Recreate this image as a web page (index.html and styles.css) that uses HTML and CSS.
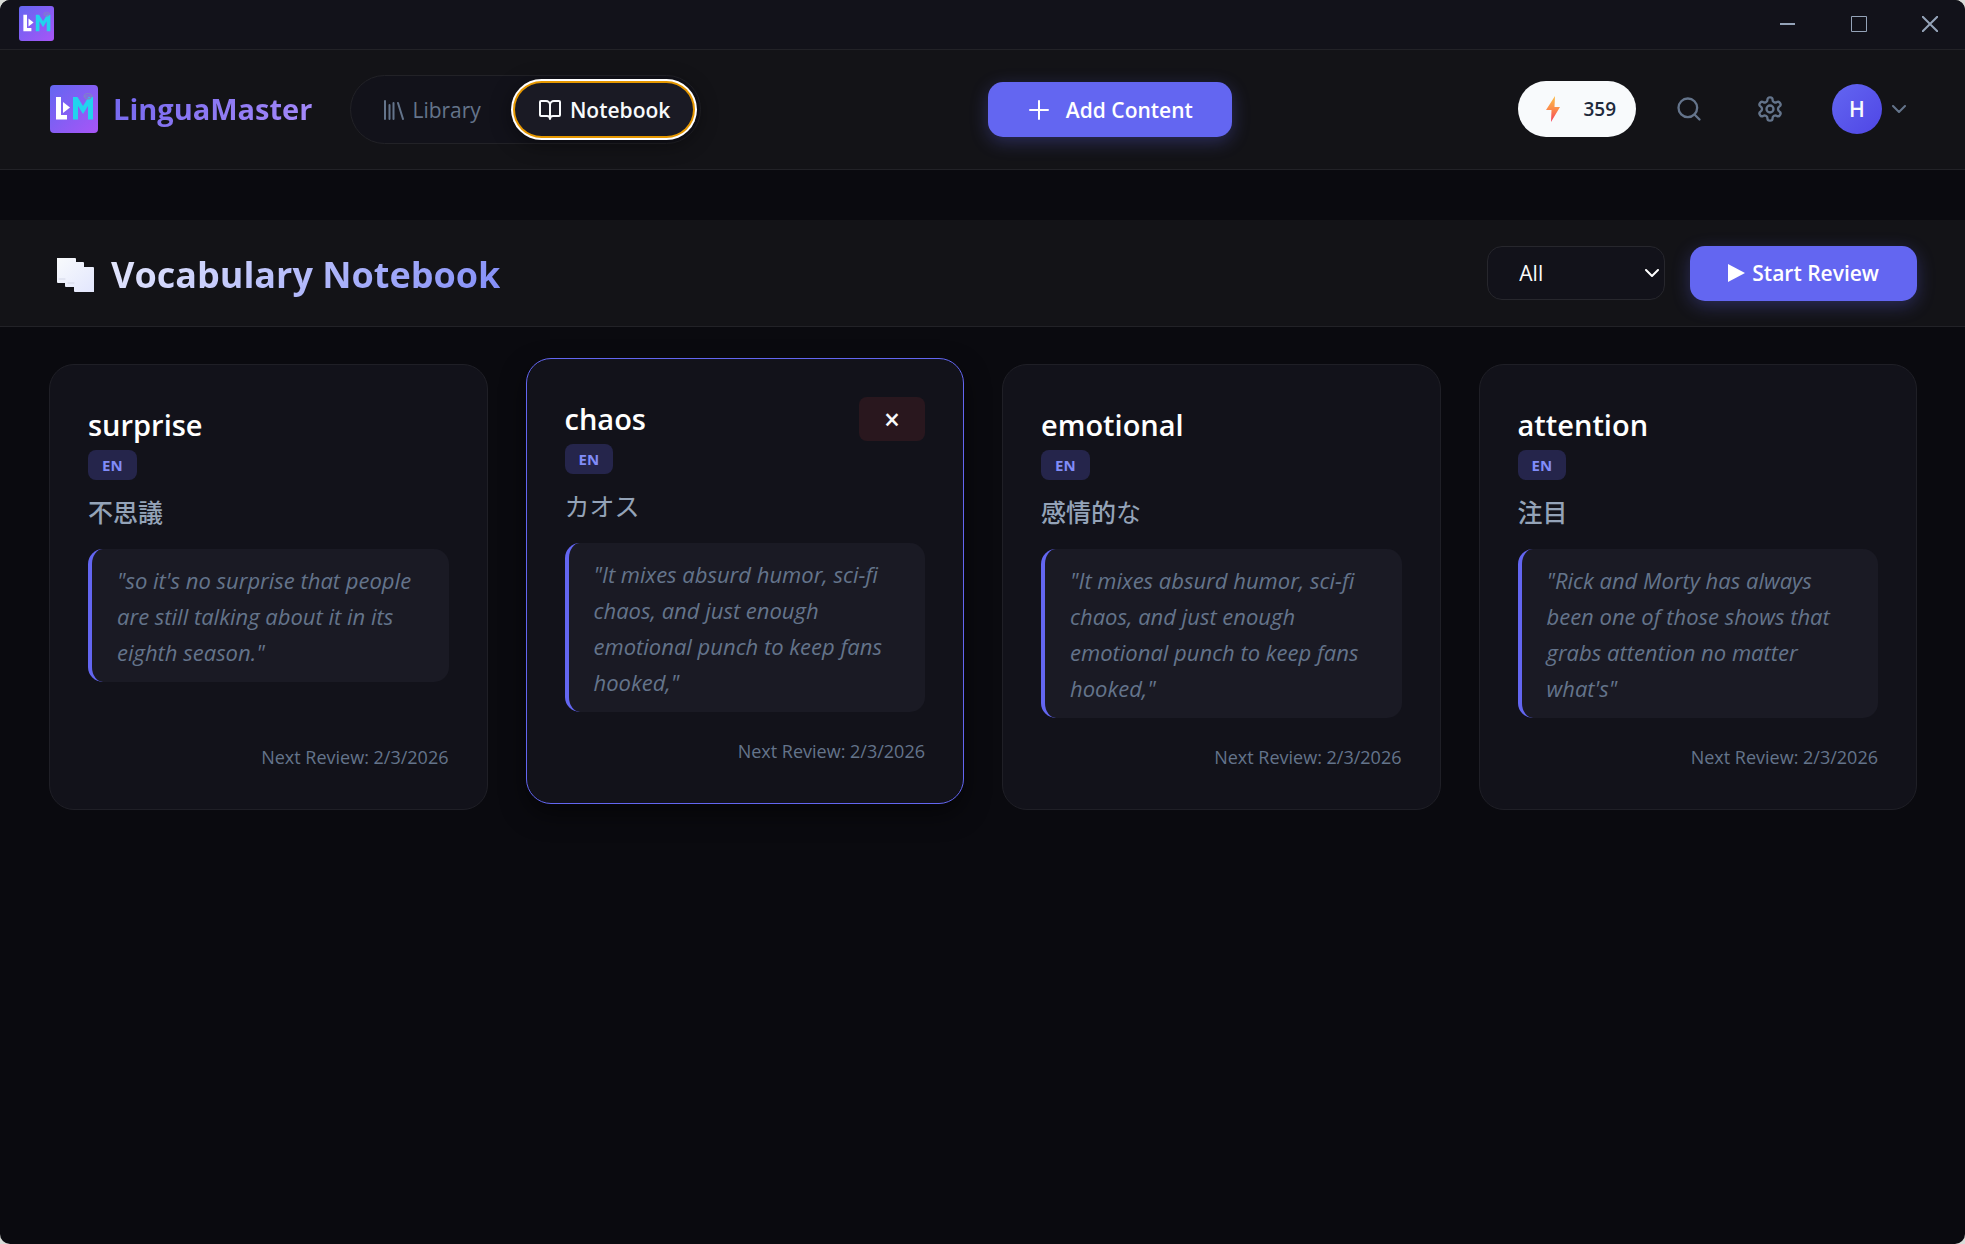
FILE: index.html
```html
<!DOCTYPE html>
<html lang="en">
<head>
<meta charset="utf-8">
<meta name="viewport" content="width=device-width, initial-scale=1">
<title>LinguaMaster</title>
<link rel="stylesheet" href="styles.css">
</head>
<body>
<svg class="defs" aria-hidden="true">
  <defs>
    <linearGradient id="brandFill" x1="0" y1="0" x2="1" y2="1">
      <stop offset="0" stop-color="#6366f1"/>
      <stop offset="1" stop-color="#a855f7"/>
    </linearGradient>
    <linearGradient id="boltFill" x1="0" y1="0" x2="0" y2="1">
      <stop offset="0" stop-color="#fbbf4a"/>
      <stop offset="0.5" stop-color="#fb8b4b"/>
      <stop offset="1" stop-color="#f43f5e"/>
    </linearGradient>
    <linearGradient id="pagesFill" x1="0" y1="0" x2="1" y2="1">
      <stop offset="0" stop-color="#f8fafc"/>
      <stop offset="1" stop-color="#e2e6fd"/>
    </linearGradient>
    <symbol id="brand" viewBox="0 0 48 48">
      <rect width="48" height="48" rx="4" fill="url(#brandFill)"/>
      <path d="M6 12h5v18h6v4.500H6z" fill="#fff"/>
      <path d="M13 17l7 5.500-7 5.500z" fill="#fff"/>
      <path d="M23 34.500V12h4.500l5.500 9 5.500-9H43v22.500h-5V21l-5 8-5-8v13.500z" fill="#22d3ee"/>
      <g fill="none" stroke="#7f83c8" stroke-width="1"><ellipse cx="38" cy="11" rx="4" ry="2.500"/><path d="M34 11h8M35 13c2 1.500 4 1.500 6 0"/></g>
    </symbol>
  </defs>
</svg>
<div class="window">
  <div class="titlebar">
    <svg class="titlebar-logo"><use href="#brand"/></svg>
    <div class="window-controls">
      <button type="button" aria-label="Minimize"><svg width="16" height="16" viewBox="0 0 16 16"><path d="M0 8h15" stroke-width="2"/></svg></button>
      <button type="button" aria-label="Maximize"><svg width="16" height="16" viewBox="0 0 16 16"><path d="M.5.5h15v15H.5z"/></svg></button>
      <button type="button" aria-label="Close"><svg width="16" height="16" viewBox="0 0 16 16"><path d="M0 0l16 16M16 0L0 16" stroke-width="2"/></svg></button>
    </div>
  </div>

  <header class="topbar">
    <div class="topbar-left">
      <a class="brand" href="#"><svg class="brand-logo"><use href="#brand"/></svg><span class="brand-name">LinguaMaster</span></a>
      <nav class="tabs">
        <a class="tab" href="#library"><svg width="20" height="20" viewBox="0 0 20 20"><path d="M1 1v18M5.500 5v14M9.500 3v16M14 3l5 16"/></svg>Library</a>
        <a class="tab tab-active" href="#notebook" aria-current="page"><svg width="24" height="24" viewBox="0 0 24 24"><path d="M12 7v14M3 18a1 1 0 0 1-1-1V4a1 1 0 0 1 1-1h5a4 4 0 0 1 4 4 4 4 0 0 1 4-4h5a1 1 0 0 1 1 1v13a1 1 0 0 1-1 1h-6a3 3 0 0 0-3 3 3 3 0 0 0-3-3z"/></svg>Notebook</a>
      </nav>
    </div>
    <button type="button" class="button button-add"><svg width="20" height="20" viewBox="0 0 20 20"><path d="M10 1v18M1 10h18"/></svg>Add Content</button>
    <div class="topbar-right">
      <div class="streak"><svg width="14" height="26" viewBox="0 0 14 26"><path d="M9 0L0 14h5.500L5 26l9-15H8.500z" fill="url(#boltFill)"/></svg><span>359</span></div>
      <button type="button" class="icon-button" aria-label="Search"><svg width="28" height="28" viewBox="0 0 24 24"><circle cx="11" cy="11" r="8"/><path d="M21 21l-4.300-4.300"/></svg></button>
      <button type="button" class="icon-button" aria-label="Settings"><svg width="28" height="28" viewBox="0 0 24 24"><path d="M12.220 2h-.44a2 2 0 0 0-2 2v.18a2 2 0 0 1-1 1.730l-.43.25a2 2 0 0 1-2 0l-.15-.08a2 2 0 0 0-2.730.73l-.22.38a2 2 0 0 0 .73 2.730l.15.1a2 2 0 0 1 1 1.720v.51a2 2 0 0 1-1 1.740l-.15.09a2 2 0 0 0-.73 2.730l.22.38a2 2 0 0 0 2.730.73l.15-.08a2 2 0 0 1 2 0l.43.25a2 2 0 0 1 1 1.730V20a2 2 0 0 0 2 2h.44a2 2 0 0 0 2-2v-.18a2 2 0 0 1 1-1.730l.43-.25a2 2 0 0 1 2 0l.15.08a2 2 0 0 0 2.730-.73l.22-.39a2 2 0 0 0-.73-2.730l-.15-.08a2 2 0 0 1-1-1.740v-.5a2 2 0 0 1 1-1.740l.15-.09a2 2 0 0 0 .73-2.730l-.22-.38a2 2 0 0 0-2.730-.73l-.15.08a2 2 0 0 1-2 0l-.43-.25a2 2 0 0 1-1-1.730V4a2 2 0 0 0-2-2z"/><circle cx="12" cy="12" r="3"/></svg></button>
      <button type="button" class="account" aria-label="Account"><span class="avatar">H</span><svg width="14" height="8" viewBox="0 0 14 8"><path d="M1 1l6 6 6-6"/></svg></button>
    </div>
  </header>

  <main class="page">
    <section class="page-head">
      <h1 class="page-title">
        <svg width="37" height="34" viewBox="0 0 37 34"><path d="M0 0h18q1 0 1 1v3h7q1 0 1 1v4h9q1 0 1 1v24H18q-1 0-1-1v-4H9q-1 0-1-1v-3H1q-1 0-1-1z" fill="url(#pagesFill)"/><path d="M2 21h6M11 25h6" stroke="#d3d6e6"/></svg>
        <span>Vocabulary Notebook</span>
      </h1>
      <div class="page-actions">
        <div class="filter">
          <select class="filter-select" aria-label="Language"><option>All</option><option>EN</option></select>
          <svg width="14" height="9" viewBox="0 0 14 9"><path d="M1 1l6 6 6-6"/></svg>
        </div>
        <button type="button" class="button button-review"><svg width="17" height="18" viewBox="0 0 17 18"><path d="M0 0l17 9-17 9z"/></svg>Start Review</button>
      </div>
    </section>

    <section class="cards">
      <article class="card">
        <div class="card-head"><div><h2 class="word">surprise</h2><span class="lang">EN</span></div></div>
        <p class="translation" lang="ja">不思議</p>
        <blockquote class="quote">"so it's no surprise that people are still talking about it in its eighth season."</blockquote>
        <p class="next">Next Review: 2/3/2026</p>
      </article>
      <article class="card card-hover">
        <div class="card-head"><div><h2 class="word">chaos</h2><span class="lang">EN</span></div><button type="button" class="remove" aria-label="Remove chaos">×</button></div>
        <p class="translation translation-kana" lang="ja">カオス</p>
        <blockquote class="quote">"It mixes absurd humor, sci-fi chaos, and just enough emotional punch to keep fans hooked,"</blockquote>
        <p class="next">Next Review: 2/3/2026</p>
      </article>
      <article class="card">
        <div class="card-head"><div><h2 class="word">emotional</h2><span class="lang">EN</span></div></div>
        <p class="translation" lang="ja">感情的<span class="translation-kana">な</span></p>
        <blockquote class="quote">"It mixes absurd humor, sci-fi chaos, and just enough emotional punch to keep fans hooked,"</blockquote>
        <p class="next">Next Review: 2/3/2026</p>
      </article>
      <article class="card">
        <div class="card-head"><div><h2 class="word">attention</h2><span class="lang">EN</span></div></div>
        <p class="translation" lang="ja">注目</p>
        <blockquote class="quote">"Rick and Morty has always been one of those shows that grabs attention no matter what's"</blockquote>
        <p class="next">Next Review: 2/3/2026</p>
      </article>
    </section>
  </main>
</div>
</body>
</html>
```
FILE: styles.css
```css
:root {
  --bg: #0a0a0f;
  --surface: #12121a;
  --raised: #1a1a24;
  --bar: #131317;
  --line: #222227;
  --accent: #6366f1;
  --text: #f8fafc;
  --soft: #94a3b8;
  --muted: #64748b;
}

* { box-sizing: border-box; }

html { background: #d9dbd8; }

body {
  margin: 0;
  color: var(--text);
  font-family: "Open Sans", "Noto Sans", "Noto Sans CJK JP", sans-serif;
}

h1, h2, p, blockquote { margin: 0; }
a { color: inherit; text-decoration: none; }
button, select { font: inherit; color: inherit; border: 0; background: none; padding: 0; }
svg { display: block; flex: none; fill: none; stroke-linecap: round; stroke-linejoin: round; }
.defs { position: absolute; width: 0; height: 0; }

.window {
  min-height: 100vh;
  background: var(--bg);
  border-radius: 10px;
  overflow: hidden;
}

.titlebar {
  display: flex;
  align-items: center;
  justify-content: space-between;
  height: 50px;
  padding: 0 0 2px 19px;
  background: var(--surface);
  border-bottom: 1px solid var(--line);
}
.titlebar-logo { width: 35px; height: 35px; }
.window-controls { display: flex; height: 100%; }
.window-controls button { display: grid; place-items: center; width: 71px; height: 100%; }
.window-controls svg { stroke: var(--soft); stroke-linecap: butt; stroke-linejoin: miter; }

.topbar {
  display: flex;
  align-items: center;
  justify-content: space-between;
  height: 120px;
  padding: 0 50px;
  background: var(--bar);
  border-bottom: 1px solid var(--line);
}
.topbar-left { display: flex; align-items: center; gap: 38px; }
.brand { display: flex; align-items: center; gap: 15px; padding-bottom: 2px; }
.brand-logo { width: 48px; height: 48px; }
.brand-name {
  font-size: 29px;
  line-height: 40px;
  font-weight: 700;
  color: transparent;
  background: linear-gradient(135deg, #7266ee, #a78bfa);
  background-clip: text;
}

.tabs {
  display: flex;
  gap: 8px;
  padding: 7px;
  border: 1px solid var(--line);
  border-radius: 35px;
  background: var(--surface);
}
.tab {
  display: flex;
  align-items: center;
  gap: 8px;
  height: 53px;
  padding: 0 26px;
  border-radius: 27px;
  font-size: 21px;
  font-weight: 500;
  color: var(--muted);
}
.tab svg { stroke: currentColor; stroke-width: 2; }
.tab-active {
  padding: 0 23px;
  font-weight: 600;
  color: var(--text);
  background: var(--raised);
  box-shadow: 0 0 0 2px #e59700, 0 0 0 4px #fff, 0 4px 20px 5px rgba(0, 0, 0, 0.4);
}

.button {
  display: flex;
  align-items: center;
  justify-content: center;
  height: 55px;
  border-radius: 15px;
  background: var(--accent);
  color: #fff;
  font-size: 21px;
  font-weight: 600;
  box-shadow: 0 5px 18px rgba(99, 102, 241, 0.3);
}
.button-add { gap: 17px; padding: 0 39px 0 41px; }
.button-add svg { stroke: #fff; stroke-width: 2; }
.button-review { gap: 7px; padding: 0 38px; }
.button-review svg { fill: #fff; }

.topbar-right { display: flex; align-items: center; gap: 25px; padding-bottom: 2px; }
.streak {
  display: flex;
  align-items: center;
  gap: 23px;
  height: 56px;
  padding: 0 20px 0 28px;
  border-radius: 28px;
  background: var(--text);
  color: #1e293b;
  font-size: 19px;
  font-weight: 600;
}
.icon-button { display: grid; place-items: center; width: 56px; height: 56px; }
.icon-button svg { stroke: var(--muted); stroke-width: 2; }
.account { display: flex; align-items: center; gap: 10px; padding: 0 9px; }
.account svg { stroke: var(--muted); stroke-width: 2; }
.avatar {
  display: grid;
  place-items: center;
  width: 50px;
  height: 50px;
  border-radius: 50%;
  background: linear-gradient(135deg, #6366f1, #4f46e5);
  font-size: 21px;
  font-weight: 600;
}

.page { padding-top: 50px; }
.page-head {
  display: flex;
  align-items: center;
  justify-content: space-between;
  height: 107px;
  padding: 0 48px 0 57px;
  background: var(--bar);
  border-bottom: 1px solid var(--line);
}
.page-title {
  display: flex;
  align-items: center;
  gap: 17px;
  padding-top: 3px;
  font-size: 36px;
  line-height: 50px;
  font-weight: 700;
}
.page-title span {
  color: transparent;
  background: linear-gradient(135deg, #e6e9fd, #818cf8);
  background-clip: text;
}
.page-actions { display: flex; align-items: center; gap: 25px; }
.filter { display: grid; align-items: center; width: 178px; }
.filter-select {
  grid-area: 1 / 1;
  appearance: none;
  height: 54px;
  padding: 0 31px;
  border: 1px solid #27272d;
  border-radius: 15px;
  background: var(--surface);
  font-size: 21px;
  font-weight: 500;
}
.filter svg {
  grid-area: 1 / 1;
  justify-self: end;
  margin-right: 6px;
  stroke: #fff;
  stroke-width: 2;
  pointer-events: none;
}

.cards {
  display: grid;
  grid-template-columns: repeat(auto-fill, minmax(350px, 1fr));
  gap: 38px;
  padding: 37px 48px 37px 49px;
}
.card {
  display: flex;
  flex-direction: column;
  padding: 38px 38px 39px;
  border: 1px solid #1f1f26;
  border-radius: 25px;
  background: var(--surface);
}
.card-hover {
  border-color: var(--accent);
  transform: translateY(-6px);
  box-shadow: 0 10px 25px rgba(0, 0, 0, 0.5);
}
.card-head { display: flex; justify-content: space-between; align-items: flex-start; }
.word { margin-bottom: 4px; font-size: 29px; line-height: 43px; font-weight: 600; color: #fff; }
.lang {
  display: block;
  width: fit-content;
  padding: 0 14px;
  border-radius: 8px;
  background: #25254b;
  color: #818cf8;
  font-size: 15px;
  line-height: 30px;
  font-weight: 700;
}
.remove {
  width: 66px;
  height: 44px;
  border-radius: 8px;
  background: #29171e;
  font-size: 28px;
  line-height: 44px;
  font-weight: 600;
}
.translation {
  margin: 13px 0 20px;
  font-family: "Noto Sans CJK JP", sans-serif;
  font-size: 25px;
  line-height: 36px;
  font-weight: 500;
  color: var(--soft);
}
.translation-kana { font-weight: 400; }
.quote {
  padding: 13px 25px 12px;
  border-left: 4px solid var(--accent);
  border-radius: 15px;
  background: var(--raised);
  color: var(--muted);
  font-size: 22px;
  line-height: 36px;
  font-style: italic;
}
.next {
  margin-top: auto;
  padding-top: 26px;
  color: var(--muted);
  font-size: 18px;
  line-height: 26px;
  text-align: right;
}
```
